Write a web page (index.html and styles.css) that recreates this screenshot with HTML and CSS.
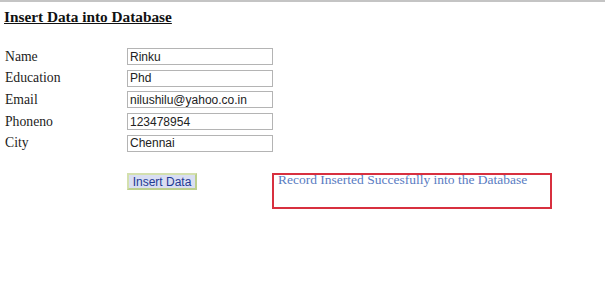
FILE: index.html
```html
<!DOCTYPE html>
<html>
<head>
<meta charset="utf-8">
<link rel="stylesheet" href="styles.css">
</head>
<body>
<div class="topline"></div>
<h1 class="title">Insert Data into Database</h1>
<div class="form">
  <div class="row"><span class="label">Name</span><input class="field" value="Rinku"></div>
  <div class="row"><span class="label">Education</span><input class="field" value="Phd"></div>
  <div class="row"><span class="label">Email</span><input class="field" value="nilushilu@yahoo.co.in"></div>
  <div class="row"><span class="label">Phoneno</span><input class="field" value="123478954"></div>
  <div class="row"><span class="label">City</span><input class="field" value="Chennai"></div>
</div>
<div class="actions">
  <button class="btn">Insert Data</button>
  <div class="msg">Record Inserted Succesfully into the Database</div>
</div>
</body>
</html>
```
FILE: styles.css
```css
html, body { margin: 0; padding: 0; background: #fff; }
body { font-family: "Liberation Serif", "Times New Roman", serif; color: #111; }
.topline { height: 2px; background: #c4c4c4; }
.title {
  margin: 6px 0 0 4px;
  font-size: 15.3px;
  font-weight: bold;
  text-decoration: underline;
  line-height: 18px;
  color: #111;
}
.form { margin-top: 22px; display: flex; flex-direction: column; gap: 4px; }
.row { display: flex; align-items: center; height: 17.6px; }
.label { width: 127px; padding-left: 5px; box-sizing: border-box; font-size: 13.7px; color: #222; }
.field {
  width: 146px; height: 17px; box-sizing: border-box;
  border: 1px solid #b4b4b4; padding: 0 2px; margin: 0;
  font-family: "Liberation Sans", Arial, sans-serif; font-size: 12px; color: #222;
  outline: none;
}
.actions { display: flex; align-items: flex-start; margin-top: 19px; padding-left: 127px; }
.btn {
  width: 70px; height: 17px; margin: 0; padding: 0;
  background: #d9def2; border: 2px solid #bccf8e; border-top-color: #d4e0ae; border-left-color: #d4e0ae;
  font-family: "Liberation Sans", Arial, sans-serif; font-size: 12px; color: #1f3a93;
  margin-top: 2px;
}
.msg {
  margin-left: 75px; width: 280px; height: 36px; box-sizing: border-box;
  border: 2px solid #d8303f; padding: 0 0 0 4px;
  font-size: 13.5px; color: #5a7cc2; line-height: 10px;
  margin-top: 2px;
}
```
